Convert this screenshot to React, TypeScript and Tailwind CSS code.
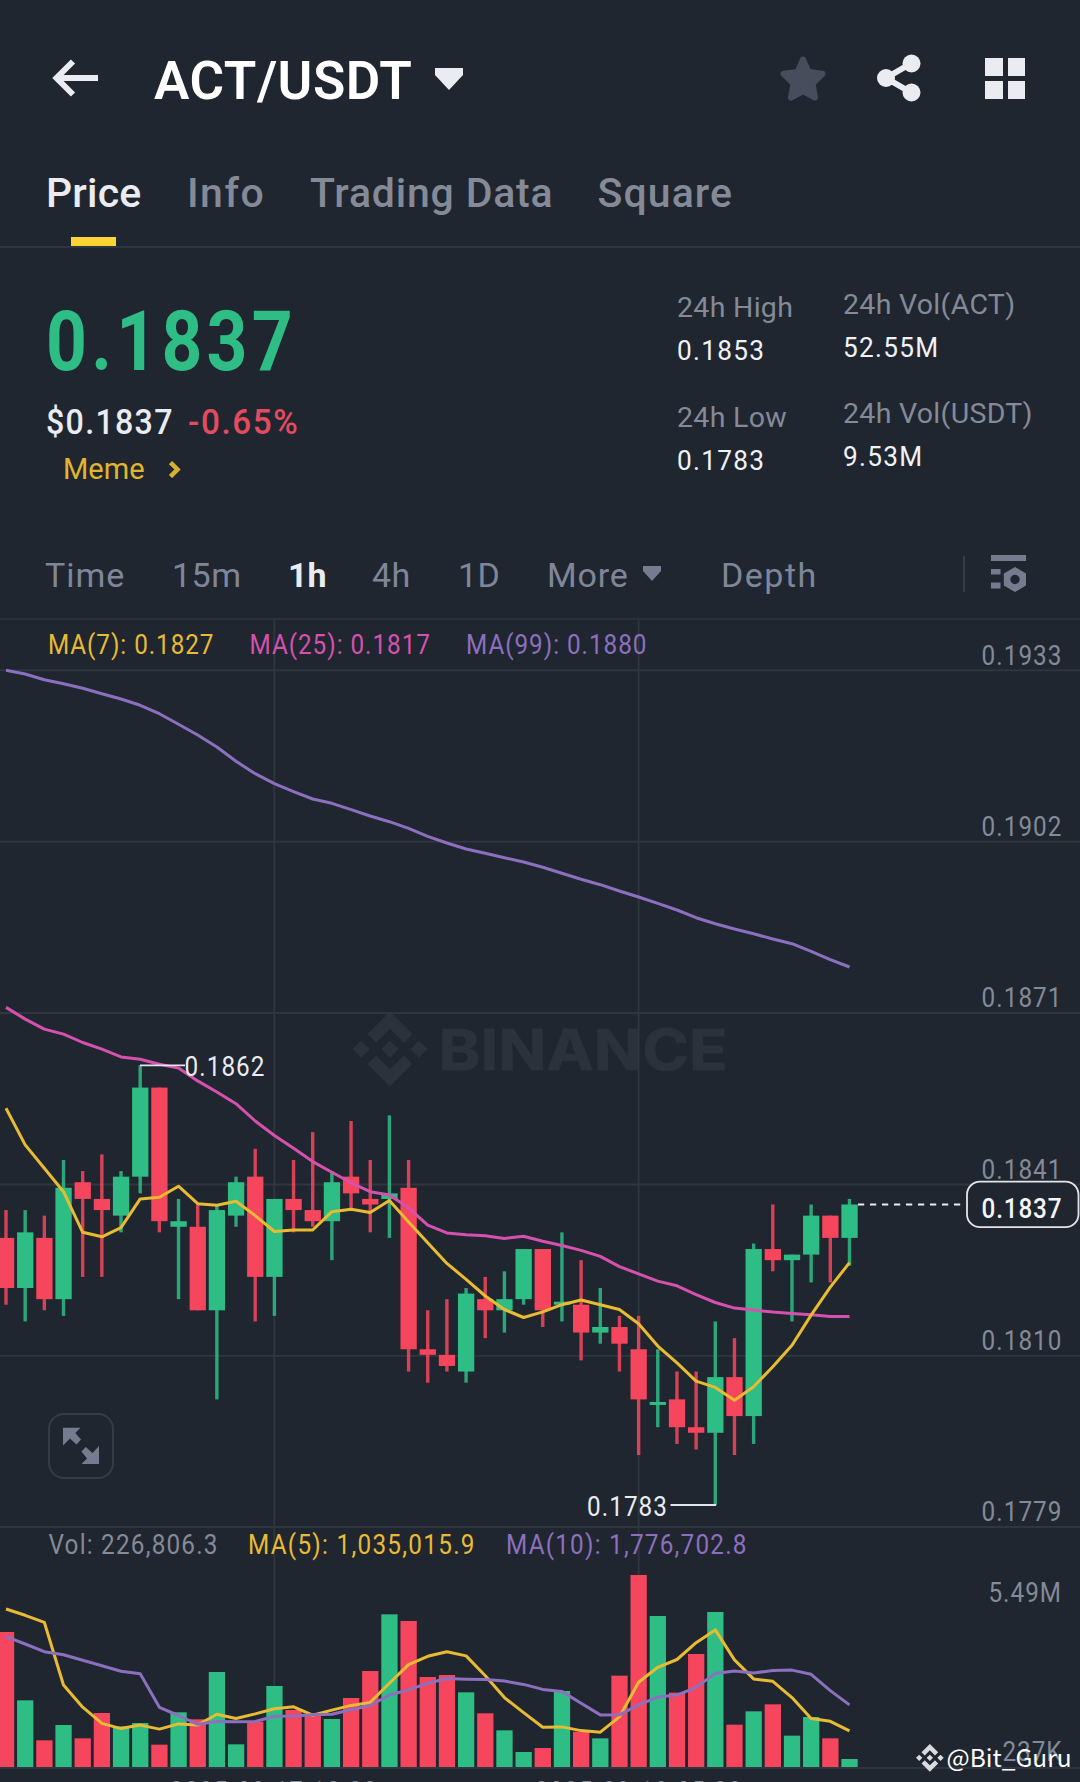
import React from 'react';

type Candle = [open: number, high: number, low: number, close: number];

// Prices in ticks (0.0001 USDT)
const candles: Candle[] = [
  [1831, 1836, 1819, 1822], [1822, 1836, 1816, 1832], [1831, 1835, 1818, 1820], [1820, 1845, 1817, 1840],
  [1841, 1843, 1824, 1838], [1838, 1846, 1824, 1836], [1835, 1843, 1832, 1842], [1842, 1862, 1839, 1858],
  [1858, 1858, 1832, 1834], [1833, 1838, 1820, 1834], [1833, 1837, 1818, 1818], [1818, 1837, 1802, 1836],
  [1835, 1842, 1833, 1841], [1842, 1847, 1816, 1824], [1824, 1838, 1817, 1838], [1838, 1845, 1832, 1836],
  [1836, 1850, 1833, 1834], [1834, 1843, 1827, 1841], [1842, 1852, 1836, 1839], [1838, 1845, 1832, 1837],
  [1838, 1853, 1831, 1839], [1840, 1845, 1807, 1811], [1811, 1818, 1805, 1810], [1810, 1820, 1807, 1808],
  [1807, 1822, 1805, 1821], [1820, 1824, 1813, 1818], [1818, 1825, 1814, 1820], [1820, 1829, 1819, 1829],
  [1829, 1829, 1815, 1818], [1819, 1832, 1816, 1819], [1819, 1827, 1809, 1814], [1814, 1822, 1812, 1815],
  [1815, 1817, 1807, 1812], [1811, 1817, 1792, 1802], [1801, 1811, 1797, 1801], [1802, 1807, 1794, 1797],
  [1797, 1807, 1793, 1796], [1796, 1816, 1783, 1806], [1806, 1813, 1792, 1799], [1799, 1830, 1794, 1829],
  [1829, 1837, 1825, 1827], [1827, 1828, 1816, 1828], [1828, 1837, 1823, 1835], [1835, 1835, 1823, 1831],
  [1831, 1838, 1826, 1837],
];

const volumes = [
  405, 200, 80, 126, 86, 162, 122, 132, 67, 164, 143, 285, 68, 136, 243, 171, 159, 144, 207, 288, 458, 438, 270,
  276, 224, 161, 110, 45, 57, 228, 106, 86, 274, 576, 453, 223, 339, 465, 127, 167, 188, 94, 150, 86, 24,
];

// Leading averages depend on candles left of the visible range
const ma7Head = [1854.3, 1847.7, 1843.5, 1839.3, 1832, 1831.2];
const ma25Head = [
  1872.4, 1870.3, 1868.5, 1867.6, 1866.1, 1864.9, 1863.5, 1863.1, 1862.2, 1861.5, 1859.2, 1857.2, 1855.1, 1852,
  1849.4, 1847.1, 1844.7, 1842.8, 1840.9, 1839.3, 1838.7, 1836.4, 1833.3, 1831.9,
];
const ma99Y = [
  670.3, 674, 679.7, 683.7, 688.3, 693.7, 699, 705.3, 713.7, 724.3, 735, 747, 761.3, 773.7, 783.7, 791.7, 799,
  803.3, 809.7, 816, 821.7, 828.3, 836.3, 843, 849, 853.3, 857.7, 862, 867.3, 873.2, 879.3, 884.7, 891, 897,
  903.4, 910, 917.7, 923.7, 929, 933.7, 939, 943.7, 951.3, 959.7, 967,
];
const volMa5Head = [474, 455, 434, 246];
const volMa10Head = [391, 369, 346, 337, 320, 304, 287, 280, 179];

const VOL_BASE = 1767;
const x = (i: number) => 6 + i * 19.17;
const priceY = (p: number) => 1204.5 - (p - 1837) * 5.568;
const volY = (v: number) => VOL_BASE - v / 3;

function average(head: number[], data: number[], size: number) {
  const rest = data.slice(head.length).map((_, k) => {
    const end = head.length + k + 1;
    return data.slice(end - size, end).reduce((a, b) => a + b, 0) / size;
  });
  return [...head, ...rest];
}

const toPoints = (ys: number[]) => ys.map((y, i) => `${x(i).toFixed(1)},${y.toFixed(1)}`).join(' ');

const closes = candles.map((c) => c[3]);
const ma7 = toPoints(average(ma7Head, closes, 7).map(priceY));
const ma25 = toPoints(average(ma25Head, closes, 25).map(priceY));
const ma99 = toPoints(ma99Y);
const volMa5 = toPoints(average(volMa5Head, volumes, 5).map(volY));
const volMa10 = toPoints(average(volMa10Head, volumes, 10).map(volY));

const GREEN = '#2ebd85';
const RED = '#f6465d';
const YELLOW = '#e9bb33';
const PINK = '#d651ae';
const PURPLE = '#8d6fbf';
const GREY = '#848a97';
const GRID = '#30363f';

const priceLevels = [
  { y: 670.3, label: '0.1933' },
  { y: 841.7, label: '0.1902' },
  { y: 1013, label: '0.1871' },
  { y: 1184.5, label: '0.1841' },
  { y: 1355.8, label: '0.1810' },
  { y: 1527, label: '0.1779' },
];

// Narrow glyphs, spread evenly over the given width
function Label({ x, y, w, fill, size = 27, weight = 400, children }: {
  x: number; y: number; w: number; fill: string; size?: number; weight?: number; children: string;
}) {
  return (
    <text
      transform={`translate(${x} ${y}) scale(0.9 1)`}
      fill={fill}
      fontSize={size}
      fontWeight={weight}
      textLength={(w - 0.5) / 0.9}
      lengthAdjust="spacing"
    >
      {children}
    </text>
  );
}

function BinanceMark() {
  return (
    <>
      <path d="M50 0 L80 30 L68.500 41.500 L50 23 L31.500 41.500 L20 30 Z" />
      <path d="M50 100 L80 70 L68.500 58.500 L50 77 L31.500 58.500 L20 70 Z" />
      <path d="M0 50 L11.500 38.500 L23 50 L11.500 61.500 Z" />
      <path d="M77 50 L88.500 38.500 L100 50 L88.500 61.500 Z" />
      <path d="M38.500 50 L50 38.500 L61.500 50 L50 61.500 Z" />
    </>
  );
}

function Header() {
  return (
    <header className="flex h-[156px] items-center pl-[52px] pr-[55px]">
      <svg width="46" height="38" viewBox="0 0 46 38" fill="none" stroke="#eaecf1" strokeWidth="6">
        <path d="M46 19H6M21 2.500L4.500 19L21 35.500" />
      </svg>
      <h1 className="ml-[56px] pt-2 text-[53px] font-semibold tracking-[0.5px] text-white">ACT/USDT</h1>
      <svg className="ml-[23px] mt-[2px]" width="28" height="22" viewBox="0 0 28 22" fill="#eaecf1">
        <path d="M0 0H28V7L14 22L0 7Z" />
      </svg>
      <div className="ml-auto flex items-center">
        <svg className="mt-[2px]" width="46" height="48" viewBox="0 0 46 48" fill="#474d5c" stroke="#474d5c" strokeWidth="6" strokeLinejoin="round">
          <path d="M23 4.500L28.500 17L42.500 18.800L32.500 28.500L35 42.500L23 36L11 42.500L13.500 28.500L3.500 18.800L17.500 17Z" />
        </svg>
        <svg className="ml-[51px]" width="44" height="48" viewBox="0 0 44 48" fill="#eaecf1">
          <path d="M34 9.500L9 24L34 38.500" fill="none" stroke="#eaecf1" strokeWidth="6" />
          <circle cx="34.500" cy="9.500" r="9" />
          <circle cx="9" cy="24" r="9" />
          <circle cx="34.500" cy="38.500" r="9" />
        </svg>
        <div className="ml-[64px] grid grid-cols-2 gap-[5px]">
          <span className="h-[18px] w-[17.5px] bg-[#eaecf1]" />
          <span className="h-[18px] w-[17.5px] bg-[#eaecf1]" />
          <span className="h-[18px] w-[17.5px] bg-[#eaecf1]" />
          <span className="h-[18px] w-[17.5px] bg-[#eaecf1]" />
        </div>
      </div>
    </header>
  );
}

function Tabs() {
  return (
    <nav className="flex h-[92px] border-b-2 border-[#2d3540] pl-[46px] text-[41px] font-medium leading-[75px] text-[#848a97]">
      <div className="flex w-[141px] flex-col">
        <span className="tracking-[0.2px] text-[#eaecf1]">Price</span>
        <span className="ml-[25px] mt-[6px] h-[9px] w-[45px] bg-[#fcd535]" />
      </div>
      <span className="w-[123px] tracking-[1.500px]">Info</span>
      <span className="w-[287.500px] tracking-[0.800px]">Trading Data</span>
      <span className="tracking-[1.100px]">Square</span>
    </nav>
  );
}

function Stat({ label, value }: { label: string; value: string }) {
  return (
    <div className="whitespace-nowrap text-[28.500px] leading-[43px]">
      <p className="tracking-[0.300px] text-[#848a97]">{label}</p>
      <p className="text-[#f0f2f6]">
        <span className="inline-block origin-left scale-x-[0.92] tracking-[1.400px]">{value}</span>
      </p>
    </div>
  );
}

function Ticker() {
  return (
    <section className="flex h-[286px]">
      <div className="w-[677px] pl-[46px] pt-[52px]">
        <p className="origin-left scale-x-[0.85] text-[84px] font-bold leading-[84px] tracking-[5px] text-[#2ebd85]">0.1837</p>
        <div className="mt-[19px] flex text-[35px] font-medium leading-[40px]">
          <span className="w-[142px] origin-left scale-x-[0.92] tracking-[1.400px] text-[#eaecf1]">$0.1837</span>
          <span className="origin-left scale-x-[0.95] tracking-[1.700px] text-[#e44b61]">-0.65%</span>
        </div>
        <div className="mt-[9px] flex items-center pl-[17px] text-[29px] leading-[34px] text-[#e0b62f]">
          Meme
          <svg className="ml-[24px]" width="12" height="17" viewBox="0 0 12 17" fill="none" stroke="#d8af30" strokeWidth="4.500">
            <path d="M1.500 1.500L8.500 8.500L1.500 15.500" />
          </svg>
        </div>
      </div>
      <div className="flex w-[166px] flex-col gap-[24px] pt-[38px]">
        <Stat label="24h High" value="0.1853" />
        <Stat label="24h Low" value="0.1783" />
      </div>
      <div className="flex flex-col gap-[23px] pt-[35px]">
        <Stat label="24h Vol(ACT)" value="52.55M" />
        <Stat label="24h Vol(USDT)" value="9.53M" />
      </div>
    </section>
  );
}

function Intervals() {
  return (
    <div className="flex h-[86px] items-center border-b-2 border-[#2a313b] pb-[2px] pl-[45px] text-[34px] text-[#80869a]">
      <span className="w-[127px] tracking-[1px]">Time</span>
      <span className="w-[116px] tracking-[0.500px]">15m</span>
      <span className="w-[84px] font-bold text-[#eaecf1]">1h</span>
      <span className="w-[86px] tracking-[0.500px]">4h</span>
      <span className="w-[89px] tracking-[0.500px]">1D</span>
      <span className="w-[96px] tracking-[0.800px]">More</span>
      <svg className="mb-[4px]" width="18" height="15" viewBox="0 0 18 15" fill="#767c8f">
        <path d="M0 0H18V5L9 15L0 5Z" />
      </svg>
      <span className="ml-[60px] tracking-[1.500px]">Depth</span>
      <span className="mb-[3px] ml-auto h-[36px] w-[2px] bg-[#363d49]" />
      <svg className="mb-[3px] ml-[26px] mr-[53px]" width="36" height="37" viewBox="0 0 36 37" fill="#767c8f">
        <path d="M0 0H35V6H0ZM0 14H9.500V19.500H0ZM0 27.500H9.500V33.500H0Z" />
        <path fillRule="evenodd" d="M24 12L35 18.500V30.500L24 37L12.800 30.500V18.500ZM24 19.800A4.700 4.700 0 1 0 24 29.200A4.700 4.700 0 1 0 24 19.800Z" />
      </svg>
    </div>
  );
}

function Chart() {
  return (
    <svg className="block" width="1080" height="1162" viewBox="0 620 1080 1162" fontFamily="Roboto, sans-serif">
      {/* Watermark */}
      <g fill="#2b323c">
        <g transform="translate(352.500 1011.500) scale(0.75)"><BinanceMark /></g>
        <text x="438.500" y="1069.500" fontFamily="Inter, sans-serif" fontSize="57" fontWeight="700" stroke="#2b323c" textLength="289" lengthAdjust="spacingAndGlyphs">BINANCE</text>
      </g>

      {/* Grid */}
      <g stroke={GRID} strokeWidth="1.800">
        {priceLevels.map((l) => <line key={l.label} x1="0" x2="1080" y1={l.y} y2={l.y} />)}
        <line x1="0" x2="1080" y1="1768" y2="1768" />
        <line x1="274.300" x2="274.300" y1="620" y2="1767" />
        <line x1="638.600" x2="638.600" y1="620" y2="1767" />
      </g>

      {/* Candles */}
      {candles.map(([open, high, low, close], i) => {
        const color = close > open || i === 29 || i === 34 ? GREEN : RED;
        const top = priceY(Math.max(open, close));
        const h = Math.abs(open - close) * 5.568;
        return (
          <g key={i} fill={color}>
            <rect x={x(i) - 1.7} y={priceY(high)} width="3.400" height={priceY(low) - priceY(high)} opacity="0.85" />
            <rect x={x(i) - 8.1} y={h ? top : top - 3} width="16.300" height={h || 3} />
          </g>
        );
      })}

      {/* Volume */}
      {volumes.map((v, i) => {
        const [open, , , close] = candles[i];
        const up = close > open || i === 29 || i === 34;
        return <rect key={i} x={x(i) - 8.1} y={volY(v)} width="16.300" height={v / 3} fill={up ? GREEN : RED} />;
      })}

      <g fill="none" strokeWidth="3" strokeLinejoin="round">
        <polyline points={ma99} stroke={PURPLE} />
        <polyline points={ma25} stroke={PINK} />
        <polyline points={ma7} stroke={YELLOW} />
        <polyline points={volMa5} stroke={YELLOW} />
        <polyline points={volMa10} stroke={PURPLE} />
      </g>

      <Label x={48} y={654} w={166} fill={YELLOW}>MA(7): 0.1827</Label>
      <Label x={249.5} y={654} w={181} fill={PINK}>MA(25): 0.1817</Label>
      <Label x={466} y={654} w={181} fill={PURPLE}>MA(99): 0.1880</Label>
      <Label x={48.5} y={1554} w={169.500} fill={GREY}>Vol: 226,806.3</Label>
      <Label x={248} y={1554} w={227} fill={YELLOW}>MA(5): 1,035,015.9</Label>
      <Label x={506} y={1554} w={241} fill={PURPLE}>MA(10): 1,776,702.8</Label>

      {/* High / low markers */}
      <g stroke="#e3e5ea" strokeWidth="1.800">
        <line x1="140" x2="185" y1="1065.300" y2="1065.300" />
        <line x1="670.500" x2="716" y1="1505" y2="1505" />
      </g>
      <Label x={184.5} y={1076} w={80.5} fill="#eaecf1">0.1862</Label>
      <Label x={587} y={1515.5} w={80.5} fill="#eaecf1">0.1783</Label>

      {/* Right axis */}
      {priceLevels.map((l) => (
        <Label key={l.label} x={981.5} y={l.y - 5.8} w={80.5} fill={GREY}>{l.label}</Label>
      ))}
      <Label x={988.5} y={1602} w={73} fill={GREY}>5.49M</Label>
      <Label x={1002.5} y={1761} w={59.5} fill={GREY}>237K</Label>

      {/* Current price */}
      <line x1="858" x2="966" y1="1204.500" y2="1204.500" stroke="#eaecf1" strokeWidth="1.800" strokeDasharray="6.200 5.800" />
      <rect x="967" y="1181.700" width="111.500" height="45.500" rx="13" fill="#1f262f" stroke="#e3e5ea" strokeWidth="1.800" />
      <Label x={981.5} y={1217.7} w={80.5} fill="#f5f6fa" weight={500}>0.1837</Label>

      {/* Expand button */}
      <rect x="49" y="1414" width="64" height="64" rx="15" fill="#1f262f" stroke="#353c48" strokeWidth="2" />
      <g fill="#767c8f">
        <path d="M63 1427.700H80.500L75.300 1433L81 1439.500L76.500 1444.500L70 1438.500L63 1445.500Z" />
        <path d="M99 1464H81.500L87 1458.500L81.500 1451.500L85.800 1447L92.500 1453L99 1446Z" />
      </g>

      {/* Time axis, clipped by the bottom edge */}
      <Label x={170} y={1799.5} w={207} size={26} fill={GREY}>2025-09-17 10:00</Label>
      <Label x={535} y={1799.5} w={207} size={26} fill={GREY}>2025-09-18 05:00</Label>

      {/* Author */}
      <g transform="translate(916 1744) scale(0.277)" fill="#d9dbde"><BinanceMark /></g>
      <text x="946.500" y="1767" fill="#fff" fontSize="24" fontFamily="'Noto Sans CJK SC', 'Noto Sans', sans-serif" textLength="125" lengthAdjust="spacingAndGlyphs">@Bit_Guru</text>
    </svg>
  );
}

export default function App() {
  return (
    <div className="h-[1782px] w-[1080px] overflow-hidden bg-[#1f262f] font-[Roboto,sans-serif]">
      <Header />
      <Tabs />
      <Ticker />
      <Intervals />
      <Chart />
    </div>
  );
}
